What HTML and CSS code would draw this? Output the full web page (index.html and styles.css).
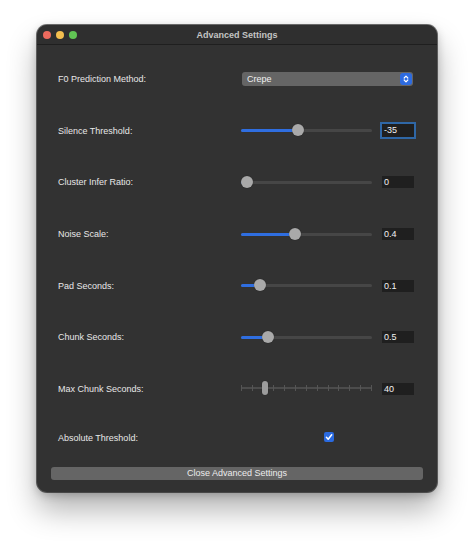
FILE: index.html
```html
<!DOCTYPE html>
<html>
<head>
<meta charset="utf-8">
<link rel="stylesheet" href="styles.css">
</head>
<body>
<div class="window">
  <div class="titlebar">
    <div class="lights">
      <span class="light red"></span>
      <span class="light yellow"></span>
      <span class="light green"></span>
    </div>
    <div class="title">Advanced Settings</div>
    <div></div>
  </div>
  <div class="content">
    <div class="row">
      <div class="label">F0 Prediction Method:</div>
      <div class="popup">
        <span class="popup-text">Crepe</span>
        <span class="stepper">
          <svg width="12" height="12" viewBox="0 0 12 12"><path d="M4.2 5 L6 3.2 L7.8 5 M4.2 7 L6 8.8 L7.8 7" fill="none" stroke="#fff" stroke-width="1.2" stroke-linecap="round" stroke-linejoin="round"/></svg>
        </span>
      </div>
    </div>
    <div class="row">
      <div class="label">Silence Threshold:</div>
      <div class="slider" style="--p:0.426"><div class="track"></div><div class="fill"></div><div class="thumb"></div></div>
      <div class="field focused">-35</div>
    </div>
    <div class="row">
      <div class="label">Cluster Infer Ratio:</div>
      <div class="slider" style="--p:0"><div class="track"></div><div class="fill"></div><div class="thumb"></div></div>
      <div class="field">0</div>
    </div>
    <div class="row">
      <div class="label">Noise Scale:</div>
      <div class="slider" style="--p:0.40"><div class="track"></div><div class="fill"></div><div class="thumb"></div></div>
      <div class="field">0.4</div>
    </div>
    <div class="row">
      <div class="label">Pad Seconds:</div>
      <div class="slider" style="--p:0.11"><div class="track"></div><div class="fill"></div><div class="thumb"></div></div>
      <div class="field">0.1</div>
    </div>
    <div class="row">
      <div class="label">Chunk Seconds:</div>
      <div class="slider" style="--p:0.174"><div class="track"></div><div class="fill"></div><div class="thumb"></div></div>
      <div class="field">0.5</div>
    </div>
    <div class="row">
      <div class="label">Max Chunk Seconds:</div>
      <div class="tick-slider" style="--p:0.168">
        <div class="tick-track"></div>
        <div class="ticks">
          <i></i><i></i><i></i><i></i><i></i><i></i><i></i><i></i><i></i><i></i><i></i><i></i><i></i>
        </div>
        <div class="tick-thumb"></div>
      </div>
      <div class="field">40</div>
    </div>
    <div class="row last">
      <div class="label">Absolute Threshold:</div>
      <div class="checkbox">
        <svg width="10" height="10" viewBox="0 0 10 10"><path d="M2.4 5.2 L4.2 7.2 L7.7 2.8" fill="none" stroke="#fff" stroke-width="1.5" stroke-linecap="round" stroke-linejoin="round"/></svg>
      </div>
    </div>
    <div class="button">Close Advanced Settings</div>
  </div>
</div>
</body>
</html>
```

FILE: styles.css
```css
html, body {
  margin: 0;
  padding: 0;
  background: #ffffff;
}

body {
  min-height: 541px;
  box-sizing: border-box;
  padding: 25px 0 0 37px;
  font-family: "Liberation Sans", Arial, sans-serif;
  font-size: 9px;
}

.window {
  width: 400px;
  height: 467px;
  box-sizing: border-box;
  background: #323232;
  border-radius: 10px;
  box-shadow: 0 18px 30px rgba(0, 0, 0, 0.3), 0 3px 10px rgba(0, 0, 0, 0.22), 0 0 0 1px rgba(0, 0, 0, 0.55);
  overflow: hidden;
}

.titlebar {
  height: 19px;
  border-bottom: 1px solid #1f1f1f;
  background: #2f2f2f;
  display: grid;
  grid-template-columns: 1fr auto 1fr;
  align-items: center;
}

.lights {
  display: flex;
  gap: 5px;
  padding-left: 6px;
  padding-top: 1px;
}

.light {
  width: 8px;
  height: 8px;
  border-radius: 50%;
  display: block;
}

.red { background: #ec6a5e; }
.yellow { background: #f4bf4f; }
.green { background: #61c554; }

.title {
  color: #c4c4c4;
  font-weight: bold;
  font-size: 9px;
  padding-top: 1px;
}

.content {
  padding-top: 8px;
  display: flex;
  flex-direction: column;
}

.row {
  height: 51.6px;
  display: flex;
  align-items: center;
  padding-left: 21px;
}

.row.last {
  height: 46px;
}

.label {
  width: 183px;
  color: #e8e8e8;
  font-size: 9px;
  padding-top: 1px;
}

.popup {
  margin-left: 1px;
  width: 171px;
  height: 14px;
  box-sizing: border-box;
  background: #656565;
  border-radius: 3px;
  display: flex;
  align-items: center;
  justify-content: space-between;
  padding: 0 1px 0 5px;
}

.popup-text {
  color: #f0f0f0;
  font-size: 9px;
}

.stepper {
  width: 12px;
  height: 12px;
  border-radius: 3px;
  background: #2d6be0;
  display: flex;
}

.slider {
  position: relative;
  width: 131px;
  height: 12px;
  margin-right: 10px;
}

.track {
  position: absolute;
  left: 0;
  right: 0;
  top: 5px;
  height: 3px;
  border-radius: 2px;
  background: #464646;
}

.fill {
  position: absolute;
  left: 0;
  top: 5px;
  height: 3px;
  border-radius: 2px;
  background: #2f6ee0;
  width: calc(var(--p) * (100% - 12px) + 6px);
}

.thumb {
  position: absolute;
  top: 0;
  left: calc(var(--p) * (100% - 12px));
  width: 12px;
  height: 12px;
  border-radius: 50%;
  background: #a9a9a9;
  box-shadow: 0 0 1px rgba(0, 0, 0, 0.5);
}

.field {
  width: 32px;
  height: 12px;
  box-sizing: border-box;
  background: #1f1f1f;
  color: #f2f2f2;
  font-size: 9px;
  line-height: 12px;
  padding-left: 2px;
  margin-top: 1px;
}

.field.focused {
  height: 13px;
  line-height: 13px;
  outline: 2px solid #2f67a6;
  margin-top: 0;
}

.tick-slider {
  position: relative;
  width: 131px;
  height: 14px;
  margin-right: 10px;
}

.tick-track {
  position: absolute;
  left: 0;
  right: 0;
  top: 6px;
  height: 2px;
  background: #4c4c4c;
}

.ticks {
  position: absolute;
  left: 0;
  right: 0;
  top: 4px;
  height: 6px;
  display: flex;
  justify-content: space-between;
}

.ticks i {
  display: block;
  width: 1px;
  height: 6px;
  background: #555555;
}

.tick-thumb {
  position: absolute;
  top: 0;
  left: calc(var(--p) * (100% - 6px));
  width: 6px;
  height: 14px;
  border-radius: 3px;
  background: #9c9c9c;
  box-shadow: 0 0 1px rgba(0, 0, 0, 0.6);
}

.checkbox {
  margin-left: 83px;
  width: 10px;
  height: 10px;
  border-radius: 2px;
  background: #2a6ae0;
  display: flex;
}

.button {
  margin: 7px 14px 0;
  height: 13px;
  border-radius: 3px;
  background: #656565;
  color: #ececec;
  font-size: 9px;
  line-height: 13px;
  text-align: center;
}
```
